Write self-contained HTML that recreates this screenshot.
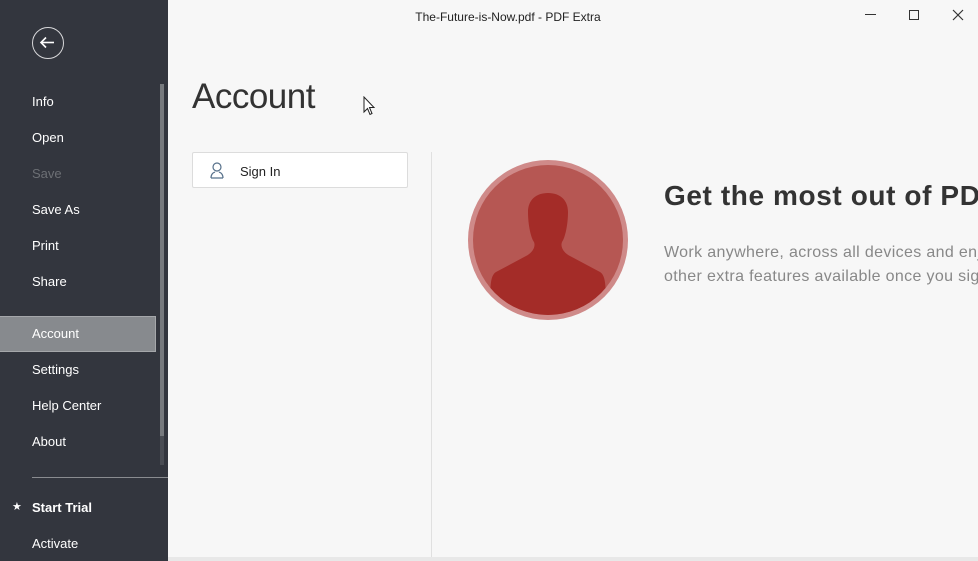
<!DOCTYPE html>
<html><head><meta charset="utf-8"><style>
*{margin:0;padding:0;box-sizing:border-box}
body{width:978px;height:561px;overflow:hidden;background:#f7f7f7;font-family:"Liberation Sans",sans-serif;position:relative}
#side{position:absolute;left:0;top:0;width:168px;height:561px;background:#33363e}
.it{position:absolute;left:32px;font-size:13px;color:#fff}
#sel{position:absolute;left:0;top:316px;width:156px;height:36px;background:#878a8e;border:1px solid #a5a7aa;border-left:none}
#sb{position:absolute;left:160px;top:84px;width:4px;height:381px;background:#4a4d54}
#sb2{position:absolute;left:160px;top:84px;width:4px;height:352px;background:#777a7e}
#hr{position:absolute;left:32px;top:477px;width:136px;height:1px;background:#8a8c90}
#back{position:absolute;left:32px;top:27px;width:32px;height:32px;border:1.5px solid #d8d8da;border-radius:50%}
.title{position:absolute;left:0;top:10px;width:1016px;text-align:center;font-size:12px;color:#222}
#clip{position:absolute;left:640px;top:170px;width:338px;height:130px;overflow:hidden}
</style></head><body>
<div id="side">
<div id="back"><svg width="29" height="29" viewBox="0 0 29 29" style="position:absolute;left:0;top:0"><path d="M8 14.5H21" stroke="#fff" stroke-width="1.6"/><path d="M13 9.5L8 14.5L13 19.5" stroke="#fff" stroke-width="1.6" fill="none"/></svg></div>
<div id="sb"></div><div id="sb2"></div>
<div class="it" style="top:94px">Info</div>
<div class="it" style="top:130px">Open</div>
<div class="it" style="top:166px;color:#6c6f74">Save</div>
<div class="it" style="top:202px">Save As</div>
<div class="it" style="top:238px">Print</div>
<div class="it" style="top:274px">Share</div>
<div id="sel"></div>
<div class="it" style="top:326px">Account</div>
<div class="it" style="top:362px">Settings</div>
<div class="it" style="top:398px">Help Center</div>
<div class="it" style="top:434px">About</div>
<div id="hr"></div>
<div class="it" style="top:500px;left:12px;font-size:11px">★</div>
<div class="it" style="top:500px;font-weight:bold">Start Trial</div>
<div class="it" style="top:536px">Activate</div>
</div>
<div class="title">The-Future-is-Now.pdf - PDF Extra</div>
<div style="position:absolute;left:865px;top:14px;width:11px;height:1px;background:#333"></div>
<div style="position:absolute;left:909px;top:10px;width:10px;height:10px;border:1px solid #333"></div>
<svg style="position:absolute;left:952px;top:9px" width="12" height="12"><path d="M1 1L11 11M11 1L1 11" stroke="#333" stroke-width="1.2"/></svg>
<div style="position:absolute;left:192px;top:77px;font-size:35px;color:#333;letter-spacing:-0.5px">Account</div>
<svg style="position:absolute;left:363px;top:96px" width="13" height="20"><path d="M1 1V16L4.5 12.5L7 18.5L9 17.5L6.5 11.5H11Z" fill="#fff" stroke="#222" stroke-width="1"/></svg>
<div style="position:absolute;left:192px;top:152px;width:216px;height:36px;background:#fff;border:1px solid #dcdcdc;border-radius:2px"></div>
<svg style="position:absolute;left:209px;top:161px" width="16" height="18"><circle cx="8" cy="6" r="4" fill="none" stroke="#56708a" stroke-width="1.2"/><path d="M2 17C2 12 5 11.5 6 11M14 17C14 12 11 11.5 10 11M2 17H14" fill="none" stroke="#56708a" stroke-width="1.2"/></svg>
<div style="position:absolute;left:240px;top:164px;font-size:13px;color:#222">Sign In</div>
<div style="position:absolute;left:431px;top:152px;width:1px;height:405px;background:#e0e0e0"></div>
<svg style="position:absolute;left:468px;top:160px" width="160" height="160" viewBox="0 0 160 160"><defs><clipPath id="c"><circle cx="80" cy="80" r="75"/></clipPath></defs><circle cx="80" cy="80" r="80" fill="#cf8a89"/><circle cx="80" cy="80" r="75" fill="#b65753"/><g clip-path="url(#c)"><path d="M80 33C68 33 60 40 60 52C60 65 63 78 66 82C68 87 64 93 58 96L28 112C22 116 22 125 22 160H138C138 125 138 116 132 112L102 96C96 93 92 87 94 82C97 78 100 65 100 52C100 40 92 33 80 33Z" fill="#a42c28"/></g></svg>
<div id="clip">
<div style="position:absolute;left:24px;top:10px;font-size:28px;font-weight:bold;color:#333;white-space:nowrap;letter-spacing:0.6px">Get the most out of PDF Extra</div>
<div style="position:absolute;left:24px;top:71px;font-size:16px;color:#888;line-height:24px;white-space:nowrap;letter-spacing:0.35px">Work anywhere, across all devices and enjoy<br>other extra features available once you sign in</div>
</div>
<div style="position:absolute;left:168px;top:557px;width:810px;height:4px;background:#e8e8e8"></div>
</body></html>
